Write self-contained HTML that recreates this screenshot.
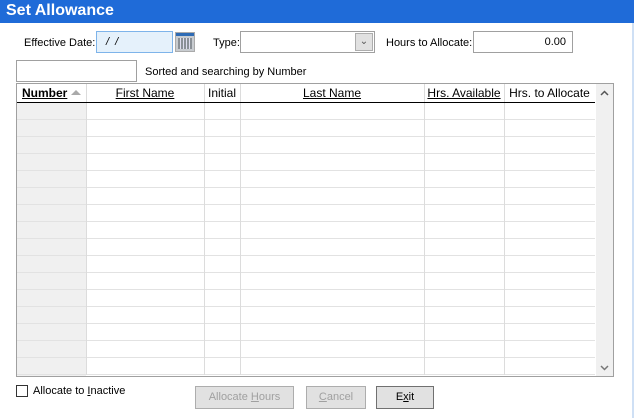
<!DOCTYPE html>
<html><head><style>
*{margin:0;padding:0;box-sizing:border-box}
body{width:634px;height:418px;background:#fff;font-family:"Liberation Sans",Arial,sans-serif;font-size:11px;color:#000;position:relative;overflow:hidden}
.a{position:absolute}
.title{left:0;top:0;width:634px;height:23px;background:#1f6bd8;color:#fff;font-weight:bold;font-size:16px;padding:2px 0 0 6px}
.lbl{font-size:11px;white-space:nowrap}
.box{border:1px solid #a0a0a0;background:#fff}
.hd{top:86px;font-size:12px;text-decoration:underline;text-align:center;white-space:nowrap}
.vl{top:84px;width:1px;height:291px;background:#dcdcdc}
.btn{border:1px solid #707070;background:#e1e1e1;text-align:center;font-size:11px;padding-top:4px;height:23px}
</style></head><body>
<div class="a title">Set Allowance</div>
<div class="a" style="left:632px;top:23px;width:2px;height:395px;background:#cfe0f5"></div>
<div class="a lbl" style="left:24px;top:37px">Effective Date:</div>
<div class="a" style="left:96px;top:31px;width:77px;height:22px;border:1px solid #7eb4ea;background:#e5f1fb;padding:4px 0 0 9px;font-style:italic">/ &nbsp;/</div>
<div class="a" style="left:175px;top:32px;width:20px;height:20px;border:1px solid #aaa;background:#c8ccd0">
 <div style="height:3px;background:#2e6bb5"></div>
 <div style="margin:2px;height:11px;background:repeating-linear-gradient(90deg,#8a9096 0 2px,#dde 2px 3px)"></div>
</div>
<div class="a lbl" style="left:213px;top:37px">Type:</div>
<div class="a box" style="left:240px;top:31px;width:135px;height:22px"></div>
<div class="a" style="left:355px;top:33px;width:18px;height:18px;border:1px solid #adadad;background:#e1e1e1;text-align:center;font-size:10px;color:#555;line-height:15px">&#8964;</div>
<div class="a lbl" style="left:386px;top:37px">Hours to Allocate:</div>
<div class="a box" style="left:473px;top:31px;width:100px;height:22px;text-align:right;padding:4px 6px 0 0">0.00</div>
<div class="a box" style="left:16px;top:60px;width:121px;height:22px"></div>
<div class="a lbl" style="left:145px;top:66px">Sorted and searching by Number</div>
<div class="a" style="left:16px;top:83px;width:598px;height:294px;border:1px solid #a0a0a0;background:#fff"></div>
<div class="a" style="left:17px;top:103px;width:69px;height:273px;background:#f0f0f0"></div>
<div class="a" style="left:17px;top:103px;width:578px;height:272px;background:repeating-linear-gradient(180deg,transparent 0 16px,#e2e2e2 16px 17px)"></div>
<div class="a vl" style="left:86px"></div>
<div class="a vl" style="left:204px"></div>
<div class="a vl" style="left:240px"></div>
<div class="a vl" style="left:424px"></div>
<div class="a vl" style="left:504px"></div>
<div class="a" style="left:17px;top:102px;width:578px;height:1px;background:#000"></div>
<div class="a hd" style="left:22px;font-weight:bold">Number</div>
<div class="a" style="left:71px;top:90px;width:0;height:0;border-left:5px solid transparent;border-right:5px solid transparent;border-bottom:5px solid #aaa"></div>
<div class="a hd" style="left:86px;width:118px">First Name</div>
<div class="a hd" style="left:204px;width:36px;text-decoration:none">Initial</div>
<div class="a hd" style="left:240px;width:184px">Last Name</div>
<div class="a hd" style="left:424px;width:80px">Hrs. Available</div>
<div class="a hd" style="left:504px;width:91px;text-decoration:none">Hrs. to Allocate</div>
<div class="a" style="left:596px;top:84px;width:17px;height:292px;background:#f0f0f0"></div>
<svg class="a" style="left:600px;top:90px" width="9" height="6"><path d="M1 5L4.5 1.5L8 5" stroke="#555" stroke-width="1.5" fill="none"/></svg>
<svg class="a" style="left:600px;top:365px" width="9" height="6"><path d="M1 1L4.5 4.5L8 1" stroke="#777" stroke-width="1.5" fill="none"/></svg>
<div class="a" style="left:16px;top:385px;width:12px;height:12px;border:1px solid #333;background:#fff"></div>
<div class="a lbl" style="left:33px;top:385px">Allocate to <u>I</u>nactive</div>
<div class="a btn" style="left:195px;top:386px;width:99px;color:#a0a0a0;border-color:#adadad">Allocate <u>H</u>ours</div>
<div class="a btn" style="left:306px;top:386px;width:60px;color:#a0a0a0;border-color:#adadad"><u>C</u>ancel</div>
<div class="a btn" style="left:376px;top:386px;width:58px">E<u>x</u>it</div>
</body></html>
